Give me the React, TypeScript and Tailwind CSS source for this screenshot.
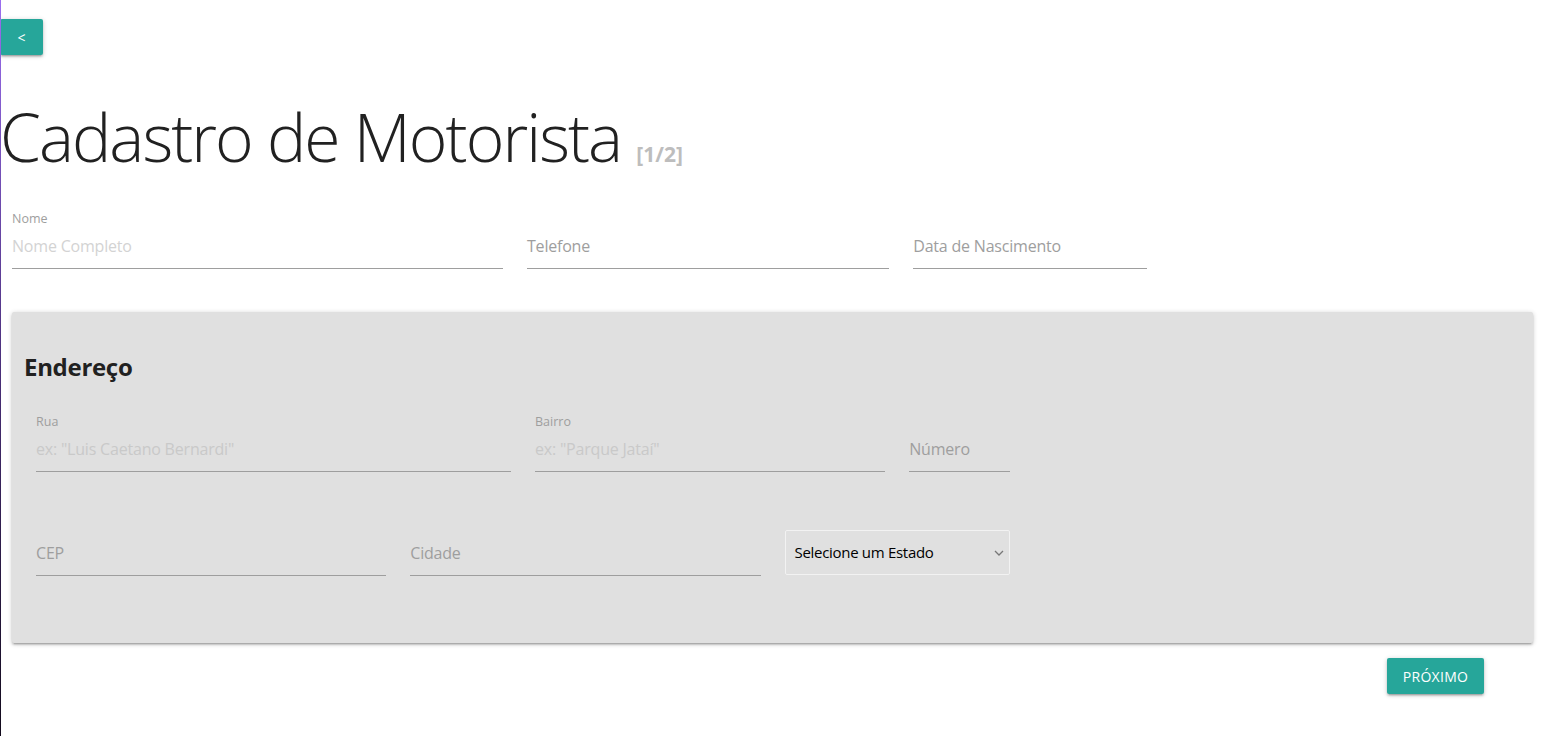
import React from "react";

const shadow = "shadow-[0_2px_2px_0_rgba(0,0,0,0.14),0_3px_1px_-2px_rgba(0,0,0,0.12),0_1px_5px_0_rgba(0,0,0,0.2)]";

function Field({
  label,
  placeholder,
  text,
  light,
}: {
  label?: string;
  placeholder?: string;
  text?: string;
  light?: boolean;
}) {
  return (
    <div className="relative h-[48px] border-b border-[#9e9e9e] flex items-center pt-[3px]">
      {label && (
        <span className="absolute left-0 top-[-8px] text-[12.5px] leading-none text-[#9e9e9e]">
          {label}
        </span>
      )}
      {placeholder && (
        <span className={`text-[16px] tracking-[-0.2px] ${light ? "text-[#c9c9c9]" : "text-[#d3d3d3]"}`}>{placeholder}</span>
      )}
      {text && <span className="text-[16px] tracking-[-0.2px] text-[#9e9e9e]">{text}</span>}
    </div>
  );
}

export default function App() {
  return (
    <div
      className="relative min-h-[736px] bg-white text-[#212121]"
      style={{ fontFamily: '"Open Sans", "Noto Sans", sans-serif' }}
    >
      <div className="absolute left-0 top-0 h-[736px] w-px bg-gradient-to-b from-[#9b6ef0] via-[#4a2f7a] to-[#120a1c]" />

      <div className="pt-[19px]">
        <button
          className={`w-[43px] h-[36px] bg-[#26a69a] text-white text-[14px] rounded-[2px] ${shadow}`}
        >
          &lt;
        </button>
      </div>

      <h1 className="mt-[44px] mb-[30px] text-[66px] leading-[74px] font-[350] tracking-[-1.95px] whitespace-nowrap">
        Cadastro de Motorista{" "}
        <span className="text-[21px] font-bold tracking-normal text-[#bdbdbd]">[1/2]</span>
      </h1>

      <div className="flex">
        <div className="w-1/3 px-3">
          <Field label="Nome" placeholder="Nome Completo" />
        </div>
        <div className="w-1/4 px-3">
          <Field text="Telefone" />
        </div>
        <div className="w-1/6 px-3">
          <Field text="Data de Nascimento" />
        </div>
      </div>

      <div className="px-3 mt-[43px]">
        <div className={`bg-[#e0e0e0] rounded-[2px] px-3 pt-[39px] pb-[67px] ${shadow}`}>
          <h5 className="text-[24px] leading-[32px] font-bold text-[#212121] mb-[41px] tracking-[-0.3px]">Endereço</h5>
          <div className="flex">
            <div className="w-1/3 px-3">
              <Field label="Rua" placeholder={'ex: "Luis Caetano Bernardi"'} light />
            </div>
            <div className="w-1/4 px-3">
              <Field label="Bairro" placeholder={'ex: "Parque Jataí"'} light />
            </div>
            <div className="w-1/12 px-3">
              <Field text="Número" />
            </div>
          </div>
          <div className="flex mt-[56px]">
            <div className="w-1/4 px-3">
              <Field text="CEP" />
            </div>
            <div className="w-1/4 px-3">
              <Field text="Cidade" />
            </div>
            <div className="w-1/6 px-3 pt-[2px]">
              <div className="h-[45px] border border-[#f2f2f2] rounded-[2px] flex items-center justify-between pl-[9px] pr-[5px]">
                <span className="text-[15px] tracking-[-0.3px] text-black">Selecione um Estado</span>
                <svg width="10" height="6" viewBox="0 0 10 6" fill="none">
                  <path d="M1 1l4 4 4-4" stroke="#777" strokeWidth="1.3" />
                </svg>
              </div>
            </div>
          </div>
        </div>
      </div>

      <div className="flex justify-end pr-[61px] mt-[15px]">
        <button
          className={`w-[97px] h-[36px] bg-[#26a69a] text-white text-[14px] uppercase rounded-[2px] tracking-[0.3px] ${shadow}`}
        >
          Próximo
        </button>
      </div>
    </div>
  );
}
